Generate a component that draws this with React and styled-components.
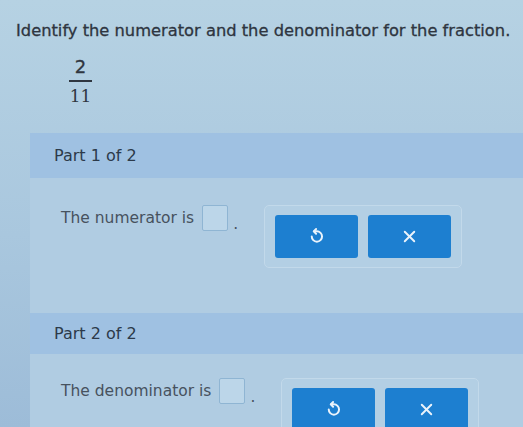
import React from 'react'
import styled, { createGlobalStyle } from 'styled-components'
import { X } from 'lucide-react'

const GlobalStyle = createGlobalStyle`
  html, body {
    margin: 0;
    padding: 0;
  }
  body {
    width: 523px;
    height: 427px;
    overflow: hidden;
    background: linear-gradient(#b6d2e3, #a9c7de 55%, #9dbcd8);
    font-family: 'DejaVu Sans', Verdana, sans-serif;
  }
`

const Page = styled.div`
  height: 427px;
  overflow: hidden;
  padding: 21px 0 0 16px;
  box-sizing: border-box;
`

const Title = styled.h1`
  margin: 0;
  font-size: 16.3px;
  line-height: 20px;
  font-weight: normal;
  color: #2e3540;
  -webkit-text-stroke: 0.3px #2e3540;
`

const Fraction = styled.div`
  display: flex;
  flex-direction: column;
  align-items: center;
  width: max-content;
  margin: 16px 0 0 53px;
  color: #2f3640;
`

const Numerator = styled.span`
  font-size: 18px;
  line-height: 20px;
  padding-bottom: 3px;
  -webkit-text-stroke: 0.3px #2f3640;
`

const Bar = styled.span`
  width: 23px;
  height: 1.5px;
  background: #2f3640;
`

const Denominator = styled.span`
  font-family: 'DejaVu Serif', serif;
  font-size: 17px;
  line-height: 20px;
  padding-top: 4px;
`

const Part = styled.section`
  margin-left: 14px;
  margin-top: ${(p) => p.$top}px;
  display: flex;
  flex-direction: column;
`

const Band = styled.div`
  height: ${(p) => p.$height}px;
  display: flex;
  align-items: center;
  padding-left: 24px;
  background: #9fc1e2;
  color: #2c3a4a;
  font-size: 16px;
`

const Body = styled.div`
  height: ${(p) => p.$height}px;
  box-sizing: border-box;
  padding: ${(p) => p.$gap}px 0 0 31px;
  background: #b0cce2;
`

const Row = styled.div`
  display: flex;
  align-items: flex-start;
  gap: 26px;
`

const Prompt = styled.div`
  display: flex;
  align-items: center;
  gap: 8px;
  color: #47525e;
  font-size: 15.5px;
`

const AnswerBox = styled.span`
  width: 26px;
  height: 26px;
  box-sizing: border-box;
  border: 1.5px solid #8fb5d3;
  border-radius: 2px;
  background: #bcd6e9;
`

const Dot = styled.span`
  margin-left: -3px;
  align-self: flex-end;
  line-height: 14px;
`

const ButtonPanel = styled.div`
  display: flex;
  gap: 10px;
  padding: 9px 10px;
  border: 1.5px solid #c2d9ea;
  border-radius: 5px;
  background: #b3cfe4;
`

const ActionButton = styled.button`
  width: 83px;
  height: 43px;
  border: none;
  border-radius: 3px;
  background: #1d7fd0;
  color: #eaf3fb;
  display: flex;
  align-items: center;
  justify-content: center;
  padding: 0;
  cursor: pointer;
`

const UndoIcon = () => (
  <svg width="19" height="19" viewBox="0 0 24 24" fill="none" stroke="currentColor"
    strokeWidth="2.5" strokeLinecap="round" strokeLinejoin="round">
    <path d="M11.5 2.5 L8.5 5.5 L11.5 8.5" />
    <path d="M9 5.5 H12.5 A6.5 6.5 0 1 1 6 12" />
  </svg>
)

const Question = ({ label, text, top, bandHeight, bodyHeight, gap }) => (
  <Part $top={top}>
    <Band $height={bandHeight}>{label}</Band>
    <Body $height={bodyHeight} $gap={gap}>
      <Row>
        <Prompt>
          {text}
          <AnswerBox />
          <Dot>.</Dot>
        </Prompt>
        <ButtonPanel>
          <ActionButton aria-label="Undo">
            <UndoIcon />
          </ActionButton>
          <ActionButton aria-label="Clear">
            <X size={19} strokeWidth={2.4} />
          </ActionButton>
        </ButtonPanel>
      </Row>
    </Body>
  </Part>
)

const App = () => (
  <>
    <GlobalStyle />
    <Page>
      <Title>Identify the numerator and the denominator for the fraction.</Title>
      <Fraction>
        <Numerator>2</Numerator>
        <Bar />
        <Denominator>11</Denominator>
      </Fraction>
      <Question
        label="Part 1 of 2"
        text="The numerator is"
        top={27}
        bandHeight={45}
        bodyHeight={135}
        gap={27}
      />
      <Question
        label="Part 2 of 2"
        text="The denominator is"
        top={0}
        bandHeight={41}
        bodyHeight={100}
        gap={24}
      />
    </Page>
  </>
)

export default App
